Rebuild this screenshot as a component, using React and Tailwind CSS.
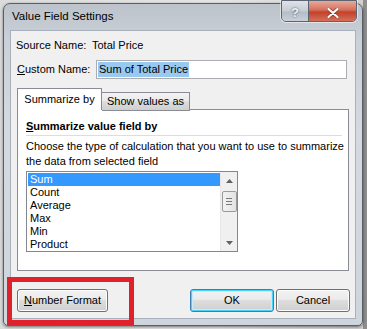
import React from "react";

const font = { fontFamily: '"Liberation Sans", Arial, sans-serif' };

function Btn({ children, className = "", def = false }) {
  return (
    <div
      className={
        "flex items-center justify-center rounded-[3px] border text-[11px] text-black whitespace-nowrap bg-[linear-gradient(#f2f2f2_0%,#ebebeb_45%,#dddddd_50%,#cfcfcf_100%)] " +
        (def
          ? "border-[#3c7fb1] shadow-[inset_0_0_0_1px_#48d4fa,inset_0_0_0_2px_#c6ecfc] "
          : "border-[#707070] shadow-[inset_0_0_0_1px_#fcfcfc] ") +
        className
      }
    >
      {children}
    </div>
  );
}

export default function App() {
  const items = ["Sum", "Count", "Average", "Max", "Min", "Product"];
  return (
    <div
      style={font}
      className="relative w-[367px] h-[329px] overflow-hidden bg-[linear-gradient(90deg,#dcdcdc_0%,#e6e6e6_60%,#d0d0d0_100%)]"
    >
      <div className="absolute right-0 top-0 w-[4px] h-full bg-[#8e8e8e]" />
      <div className="pt-[3px] pl-[3px]">
        {/* window */}
        <div className="relative w-[360px] h-[323px] rounded-t-[7px] rounded-b-[5px] border border-[#5a5f66] bg-[linear-gradient(180deg,#bcc3cb_0%,#cbd1d8_12%,#d5dae0_40%,#cfd5dc_100%)] shadow-[0_1px_3px_rgba(0,0,0,0.5)] flex flex-col px-[6px] pb-[6px]">
          <div className="h-[27px] flex items-center pl-[2px] text-[11.5px] text-black shrink-0 -mt-[1px] whitespace-nowrap">
            <div className="pt-[1px]">Value Field Settings</div>
          </div>
          {/* caption buttons */}
          <div className="absolute top-[-4px] right-[5px] flex h-[22px] rounded-b-[5px] border border-[#5b6470] overflow-hidden shadow-[0_0_0_1px_rgba(255,255,255,0.5)]">
            <div className="w-[27px] flex items-center justify-center bg-[linear-gradient(180deg,#dfe3e8_0%,#c6cdd5_50%,#b4bcc6_55%,#c9d0d8_100%)] border-r border-[#5b6470] text-[13px] font-bold text-[#eef1f4] [text-shadow:0_0_2px_#3a4350] pt-[3px]">
              ?
            </div>
            <div className="w-[47px] flex items-center justify-center bg-[linear-gradient(180deg,#e9a99b_0%,#d4705c_45%,#c4412a_55%,#d2705a_100%)] pt-[3px]">
              <svg width="12" height="10" viewBox="0 0 12 10">
                <path d="M1.5 1 L10.5 9 M10.5 1 L1.5 9" stroke="#5a1a10" strokeWidth="3.6" strokeLinecap="round" opacity="0.5" />
                <path d="M1.5 1 L10.5 9 M10.5 1 L1.5 9" stroke="#ffffff" strokeWidth="2.2" strokeLinecap="round" />
              </svg>
            </div>
          </div>
          {/* client area */}
          <div className="flex-1 border border-[#a7b0bb] bg-[#f0f0f0] flex flex-col text-[11px] text-black whitespace-nowrap">
            <div className="flex items-center h-[14px] mt-[7px] pl-[5px]">
              <div className="w-[76px] shrink-0">Source Name:</div>
              <div>Total Price</div>
            </div>
            <div className="flex items-center mt-[8px] pl-[6px]">
              <div className="w-[79px] shrink-0">
                <span className="underline">C</span>ustom Name:
              </div>
              <div className="w-[251px] h-[19px] border border-[#abadb3] bg-white flex items-center pl-[1px]">
                <div className="bg-[#99c9ef] px-[1px] leading-[15px]">Sum of Total Price</div>
              </div>
            </div>
            {/* tabs */}
            <div className="mt-[9px] ml-[6px] w-[332px] flex flex-col">
              <div className="flex items-end h-[22px] relative z-10">
                <div className="w-[85px] h-[22px] bg-white border border-b-0 border-[#898c95] flex items-center justify-center pb-[1px]">
                  Summarize by
                </div>
                <div className="w-[88px] h-[19px] border border-l-0 border-[#898c95] bg-[linear-gradient(#f2f2f2_0%,#ebebeb_45%,#dddddd_50%,#cfcfcf_100%)] flex items-center justify-center -mb-[1px]">
                  Show values as
                </div>
              </div>
              <div className="h-[162px] -mt-[1px] border border-[#898c95] bg-white flex flex-col pl-[8px] pr-[4px]">
                <div className="mt-[8px] h-[17px] flex items-center font-bold">
                  <div>
                    <span className="underline">S</span>ummarize value field by
                  </div>
                </div>
                <div className="h-[1px] bg-[#d5dfe5] mr-[2px]" />
                <div className="mt-[3px] leading-[15px] whitespace-normal">
                  Choose the type of calculation that you want to use to summarize the data from selected field
                </div>
                <div className="mt-[2px] w-[212px] h-[81px] border border-[#828790] bg-white flex">
                  <div className="flex-1 flex flex-col pt-[1px] pl-[1px]">
                    {items.map((t, i) => (
                      <div
                        key={t}
                        className={
                          "h-[13px] leading-[13px] pl-[2px] " +
                          (i === 0 ? "bg-[#3399ff] text-white" : "")
                        }
                      >
                        {t}
                      </div>
                    ))}
                  </div>
                  <div className="w-[17px] bg-[#f0f0f0] border-l border-[#e6e6e6] flex flex-col items-center">
                    <div className="h-[17px] flex items-center justify-center">
                      <svg width="7" height="4" viewBox="0 0 7 4">
                        <path d="M0 4 L3.5 0 L7 4 Z" fill="#606060" />
                      </svg>
                    </div>
                    <div className="mt-[2px] w-[15px] h-[21px] rounded-[2px] border border-[#9a9a9a] bg-[linear-gradient(90deg,#f2f2f2,#e3e3e3)] flex flex-col items-center justify-center gap-[2px]">
                      <div className="w-[6px] h-[1px] bg-[#7a7a7a]" />
                      <div className="w-[6px] h-[1px] bg-[#7a7a7a]" />
                      <div className="w-[6px] h-[1px] bg-[#7a7a7a]" />
                    </div>
                    <div className="flex-1" />
                    <div className="h-[17px] flex items-center justify-center">
                      <svg width="7" height="4" viewBox="0 0 7 4">
                        <path d="M0 0 L7 0 L3.5 4 Z" fill="#606060" />
                      </svg>
                    </div>
                  </div>
                </div>
              </div>
            </div>
            {/* buttons */}
            <div className="mt-[18px] flex items-center pl-[6px] pr-[5px]">
              <Btn className="w-[91px] h-[23px]">
                <div>
                  <span className="underline">N</span>umber Format
                </div>
              </Btn>
              <div className="flex-1" />
              <Btn def className="w-[84px] h-[23px] mr-[2px]">OK</Btn>
              <Btn className="w-[74px] h-[23px]">Cancel</Btn>
            </div>
          </div>
        </div>
      </div>
      <div className="absolute left-[7px] top-[277px] w-[127px] h-[48px] border-[5px] border-[#e0202a]" />
    </div>
  );
}
